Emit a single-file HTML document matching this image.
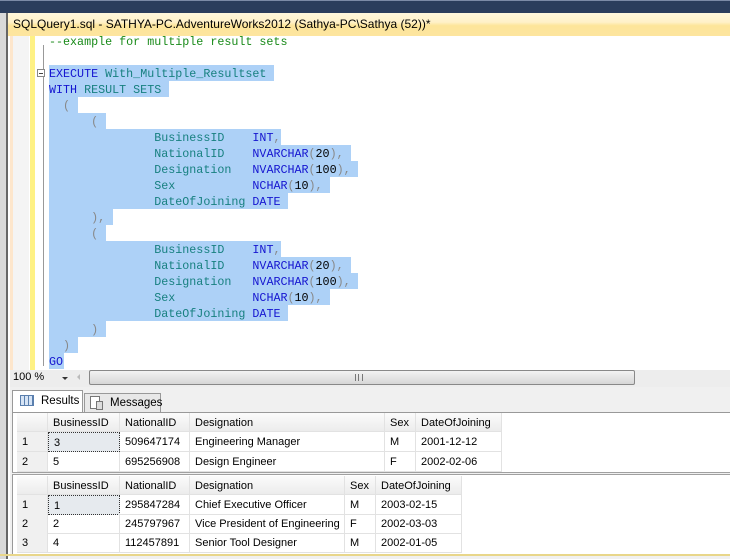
<!DOCTYPE html><html><head><style>
*{margin:0;padding:0;box-sizing:border-box}
body{width:730px;height:559px;overflow:hidden;position:relative;background:#fff;font-family:"Liberation Sans",sans-serif}
.a{position:absolute}
.code{position:absolute;left:49px;font-family:"Liberation Mono",monospace;font-size:11.7px;line-height:16px;white-space:pre}
.ln{position:absolute;left:49px;height:16px;background:#add1f7}
.k{color:#1515d0}.c{color:#178080}.g{color:#888}.cm{color:#198a19}.n{color:#000}
.grid{position:absolute;font-size:11px;color:#000}
.grid div{position:absolute;height:20px;line-height:21px;padding-left:5px;border-right:1px solid #e2e2e2;border-bottom:1px solid #e2e2e2;white-space:nowrap}
.h{background:linear-gradient(#fbfbfb,#ececec)}
.rn{background:#f0f0f0}
</style></head><body>
<div class="a" style="left:0;top:0;width:730px;height:13px;background:#2b3d5c;border-top:1px solid #7c8aa6"></div>
<div class="a" style="left:0;top:13px;width:8px;height:546px;background:#d9d9d9;border-right:2px solid #666"></div>
<div class="a" style="left:8px;top:13px;width:722px;height:23px;background:linear-gradient(#fff7dc,#fff1c8 40%,#fde59a 55%,#fde59f)"></div>
<div class="a" style="left:13px;top:17px;font-size:12px;color:#000;white-space:nowrap">SQLQuery1.sql - SATHYA-PC.AdventureWorks2012 (Sathya-PC\Sathya (52))*</div>
<div class="a" style="left:10px;top:36px;width:19px;height:334px;background:#f4f4f4;border-left:3px solid #fde6cc"></div>
<div class="a" style="left:30px;top:36px;width:5px;height:334px;background:#fef184"></div>
<div class="a" style="left:43px;top:45px;width:1px;height:321px;background:#999"></div>
<div class="a" style="left:37px;top:69px;width:8px;height:8px;border:1px solid #888;background:#fff"></div>
<div class="a" style="left:39px;top:73px;width:4px;height:1px;background:#444"></div>
<div class="ln" style="top:65px;width:225px"></div>
<div class="ln" style="top:81px;width:120px"></div>
<div class="ln" style="top:97px;width:29px"></div>
<div class="ln" style="top:113px;width:57px"></div>
<div class="ln" style="top:129px;width:232px"></div>
<div class="ln" style="top:145px;width:302px"></div>
<div class="ln" style="top:161px;width:309px"></div>
<div class="ln" style="top:177px;width:281px"></div>
<div class="ln" style="top:193px;width:239px"></div>
<div class="ln" style="top:209px;width:64px"></div>
<div class="ln" style="top:225px;width:57px"></div>
<div class="ln" style="top:241px;width:232px"></div>
<div class="ln" style="top:257px;width:302px"></div>
<div class="ln" style="top:273px;width:309px"></div>
<div class="ln" style="top:289px;width:281px"></div>
<div class="ln" style="top:305px;width:239px"></div>
<div class="ln" style="top:321px;width:57px"></div>
<div class="ln" style="top:337px;width:29px"></div>
<div class="ln" style="top:353px;width:15px"></div>
<div class="code" style="top:34px"><span class="cm">--example for multiple result sets</span>

<span class="k">EXECUTE</span> <span class="c">With_Multiple_Resultset</span>
<span class="k">WITH</span> <span class="c">RESULT SETS</span>
  <span class="g">(</span>
      <span class="g">(</span>
               <span class="c">BusinessID</span>    <span class="k">INT</span><span class="g">,</span>
               <span class="c">NationalID</span>    <span class="k">NVARCHAR</span><span class="g">(</span><span class="n">20</span><span class="g">),</span>
               <span class="c">Designation</span>   <span class="k">NVARCHAR</span><span class="g">(</span><span class="n">100</span><span class="g">),</span>
               <span class="c">Sex</span>           <span class="k">NCHAR</span><span class="g">(</span><span class="n">10</span><span class="g">),</span>
               <span class="c">DateOfJoining</span> <span class="k">DATE</span>
      <span class="g">),</span>
      <span class="g">(</span>
               <span class="c">BusinessID</span>    <span class="k">INT</span><span class="g">,</span>
               <span class="c">NationalID</span>    <span class="k">NVARCHAR</span><span class="g">(</span><span class="n">20</span><span class="g">),</span>
               <span class="c">Designation</span>   <span class="k">NVARCHAR</span><span class="g">(</span><span class="n">100</span><span class="g">),</span>
               <span class="c">Sex</span>           <span class="k">NCHAR</span><span class="g">(</span><span class="n">10</span><span class="g">),</span>
               <span class="c">DateOfJoining</span> <span class="k">DATE</span>
      <span class="g">)</span>
  <span class="g">)</span>
<span class="k">GO</span></div>
<div class="a" style="left:10px;top:370px;width:720px;height:17px;background:#ededed"></div>
<div class="a" style="left:13px;top:371px;font-size:11px;color:#000">100 %</div>
<div class="a" style="left:62px;top:377px;border-left:3px solid transparent;border-right:3px solid transparent;border-top:3px solid #333"></div>
<div class="a" style="left:77px;top:374px;border-top:3px solid transparent;border-bottom:3px solid transparent;border-right:3px solid #bbb"></div>
<div class="a" style="left:89px;top:370px;width:546px;height:15px;border:1px solid #888;border-radius:2px;background:linear-gradient(#f2f2f2,#d6d6d6)"></div>
<div class="a" style="left:355px;top:374px;width:8px;height:7px;border-left:1px solid #777;border-right:1px solid #777"></div>
<div class="a" style="left:358px;top:374px;width:1px;height:7px;background:#777"></div>
<div class="a" style="left:10px;top:387px;width:720px;height:172px;background:#f0f0f0"></div>
<div class="a" style="left:12px;top:390px;width:71px;height:23px;background:#fff;border:1px solid #999;border-bottom:none"></div>
<div class="a" style="left:20px;top:395px;width:14px;height:11px;border:1px solid #5a7fae;background:repeating-linear-gradient(90deg,#d6e4f5 0 3px,#5a7fae 3px 4px)"></div>
<div class="a" style="left:41px;top:395px;font-size:11.5px">Results</div>
<div class="a" style="left:84px;top:393px;width:77px;height:20px;background:#e8e8e8;border:1px solid #999;border-bottom:none"></div>
<div class="a" style="left:90px;top:396px;width:10px;height:13px;border:1px solid #777;background:#fff"></div>
<div class="a" style="left:96px;top:401px;width:7px;height:9px;border:1px solid #777;background:#ddd"></div>
<div class="a" style="left:110px;top:397px;font-size:11.5px">Messages</div>
<div class="a" style="left:12px;top:412px;width:718px;height:143px;background:#fff;border-top:1px solid #999;border-left:1px solid #999"></div>
<div class="a" style="left:12px;top:472px;width:718px;height:3px;border-top:1px solid #a0a0a0;border-bottom:1px solid #a0a0a0;background:#f0f0f0"></div>
<div class="a" style="left:0;top:554px;width:730px;height:2px;background:#e8d68a"></div>
<div class="grid" style="left:0;top:0">
<div class="h" style="left:17px;top:413px;width:31px;height:19px"></div>
<div class="h" style="left:48px;top:413px;width:72px;height:19px">BusinessID</div>
<div class="h" style="left:120px;top:413px;width:70px;height:19px">NationalID</div>
<div class="h" style="left:190px;top:413px;width:195px;height:19px">Designation</div>
<div class="h" style="left:385px;top:413px;width:31px;height:19px">Sex</div>
<div class="h" style="left:416px;top:413px;width:86px;height:19px">DateOfJoining</div>
<div class="rn" style="left:17px;top:432px;width:31px">1</div>
<div style="left:48px;top:432px;width:72px;border:1px dotted #333;background:#e6eaee">3</div>
<div style="left:120px;top:432px;width:70px">509647174</div>
<div style="left:190px;top:432px;width:195px">Engineering Manager</div>
<div style="left:385px;top:432px;width:31px">M</div>
<div style="left:416px;top:432px;width:86px">2001-12-12</div>
<div class="rn" style="left:17px;top:452px;width:31px">2</div>
<div style="left:48px;top:452px;width:72px">5</div>
<div style="left:120px;top:452px;width:70px">695256908</div>
<div style="left:190px;top:452px;width:195px">Design Engineer</div>
<div style="left:385px;top:452px;width:31px">F</div>
<div style="left:416px;top:452px;width:86px">2002-02-06</div>
<div class="h" style="left:17px;top:476px;width:31px;height:19px"></div>
<div class="h" style="left:48px;top:476px;width:72px;height:19px">BusinessID</div>
<div class="h" style="left:120px;top:476px;width:70px;height:19px">NationalID</div>
<div class="h" style="left:190px;top:476px;width:155px;height:19px">Designation</div>
<div class="h" style="left:345px;top:476px;width:31px;height:19px">Sex</div>
<div class="h" style="left:376px;top:476px;width:86px;height:19px">DateOfJoining</div>
<div class="rn" style="left:17px;top:495px;width:31px">1</div>
<div style="left:48px;top:495px;width:72px;border:1px dotted #333;background:#e6eaee">1</div>
<div style="left:120px;top:495px;width:70px">295847284</div>
<div style="left:190px;top:495px;width:155px">Chief Executive Officer</div>
<div style="left:345px;top:495px;width:31px">M</div>
<div style="left:376px;top:495px;width:86px">2003-02-15</div>
<div class="rn" style="left:17px;top:514px;width:31px">2</div>
<div style="left:48px;top:514px;width:72px">2</div>
<div style="left:120px;top:514px;width:70px">245797967</div>
<div style="left:190px;top:514px;width:155px">Vice President of Engineering</div>
<div style="left:345px;top:514px;width:31px">F</div>
<div style="left:376px;top:514px;width:86px">2002-03-03</div>
<div class="rn" style="left:17px;top:533px;width:31px">3</div>
<div style="left:48px;top:533px;width:72px">4</div>
<div style="left:120px;top:533px;width:70px">112457891</div>
<div style="left:190px;top:533px;width:155px">Senior Tool Designer</div>
<div style="left:345px;top:533px;width:31px">M</div>
<div style="left:376px;top:533px;width:86px">2002-01-05</div>
</div>
</body></html>
